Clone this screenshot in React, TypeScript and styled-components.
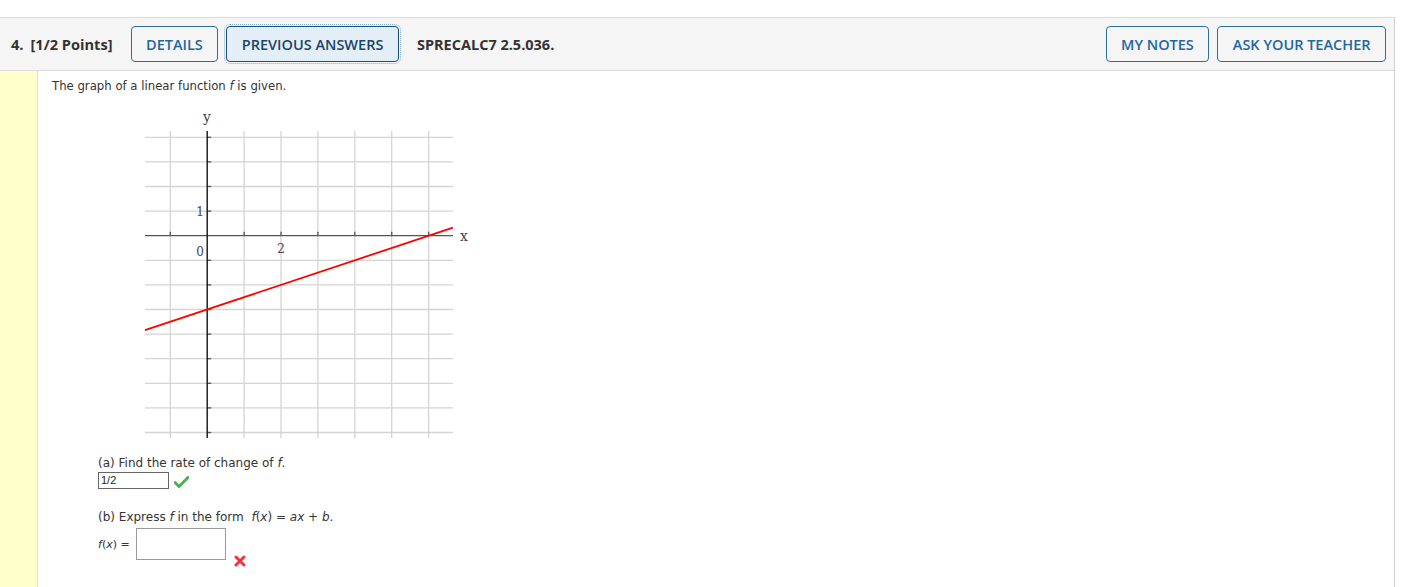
import React from "react";
import styled, { createGlobalStyle } from "styled-components";

const GlobalStyle = createGlobalStyle`
  html, body { margin: 0; padding: 0; background: #ffffff; }
  body { font-family: "DejaVu Sans", Verdana, sans-serif; color: #333333; }
`;

const Page = styled.div`
  padding-top: 17px;
  width: 1395px;
`;

const Question = styled.section`
  border-top: 1px solid #dcdcdc;
  border-right: 1px solid #cfcfcf;
`;

const Header = styled.header`
  display: flex;
  align-items: center;
  gap: 8px;
  height: 52px;
  padding: 0 8px 0 11px;
  background: #f5f5f5;
  border-bottom: 1px solid #dcdcdc;
  font-family: "Open Sans", "Liberation Sans", sans-serif;
`;

const Title = styled.span`
  font-size: 14.6px;
  font-weight: 700;
  color: #333333;
  margin-right: 10px;
  white-space: nowrap;
`;

const Num = styled.span`
  margin-right: 7px;
`;

const Button = styled.button<{ $active?: boolean }>`
  height: 36px;
  padding: 0 14.5px;
  border-radius: 4px;
  border: 1px solid ${(p) => (p.$active ? "#1c4e74" : "#2b6ea0")};
  background: ${(p) => (p.$active ? "#e4eef6" : "transparent")};
  color: ${(p) => (p.$active ? "#1b4566" : "#1e67a0")};
  font-family: "Open Sans", "Liberation Sans", sans-serif;
  font-size: 14.5px;
  font-weight: 600;
  white-space: nowrap;
  outline: ${(p) => (p.$active ? "1px dotted #7aaee0" : "none")};
  outline-offset: 1px;
`;

const Code = styled.span`
  margin-left: 10px;
  font-size: 14.5px;
  font-weight: 700;
  color: #333333;
`;

const Spacer = styled.div`
  flex: 1;
`;

const Body = styled.div`
  display: flex;
  min-height: 520px;
`;

const Marker = styled.div`
  width: 37px;
  flex: none;
  background: #ffffcc;
  border-right: 1px solid #dcdcdc;
`;

const Content = styled.div`
  padding: 7px 0 0 14px;
  font-size: 12px;
`;

const Text = styled.p<{ $size?: number }>`
  margin: 0;
  line-height: 16px;
  font-size: ${(p) => p.$size ?? 12}px;
  color: #333333;
`;

const GraphBox = styled.div`
  margin: 6px 0 0 78px;
  height: 345px;
`;

const Parts = styled.div`
  margin: 10px 0 0 46px;
`;

const AnswerRow = styled.div<{ $top: number }>`
  display: flex;
  align-items: flex-start;
  margin-top: ${(p) => p.$top}px;
`;

const SmallInput = styled.div`
  box-sizing: border-box;
  width: 71px;
  height: 17px;
  border: 1px solid #666666;
  font-family: "Liberation Sans", Arial, sans-serif;
  font-size: 11px;
  line-height: 15px;
  padding-left: 2px;
  color: #222222;
`;

const BigInput = styled.div`
  box-sizing: border-box;
  width: 90px;
  height: 32px;
  border: 1px solid #9a9a9a;
  background: #ffffff;
`;

const FxLabel = styled.span`
  font-size: 11px;
  line-height: 16px;
  margin: 9px 6px 0 0;
  color: #333333;
`;

const Icon = styled.span<{ $left: number; $top: number }>`
  display: inline-flex;
  margin-left: ${(p) => p.$left}px;
  margin-top: ${(p) => p.$top}px;
`;

const I = styled.i`
  font-style: italic;
`;

const Graph: React.FC = () => {
  const vx = Array.from({ length: 8 }, (_, k) => 170.3 + 36.9 * k);
  const hy = Array.from({ length: 13 }, (_, k) => 137.3 + 24.6 * k);
  const y0 = 235.7;
  const x0 = 207.2;
  return (
    <svg width="350" height="345" viewBox="130 100 350 345">
      <g stroke="#d4d4d4" strokeWidth="1.3">
        {vx.map((x, i) =>
          i === 1 ? null : <line key={"v" + i} x1={x} y1={131} x2={x} y2={438} />
        )}
        {hy.map((y, i) =>
          i === 4 ? null : <line key={"h" + i} x1={145} y1={y} x2={453} y2={y} />
        )}
      </g>
      <line x1={145} y1={y0} x2={453} y2={y0} stroke="#555555" strokeWidth="1.3" />
      <g stroke="#555555" strokeWidth="1.3">
        {vx.map((x, i) =>
          i === 1 ? null : <line key={"tx" + i} x1={x} y1={y0 - 4} x2={x} y2={y0} />
        )}
        {hy.map((y, i) =>
          i === 4 ? null : <line key={"ty" + i} x1={x0} y1={y} x2={x0 + 4} y2={y} />
        )}
      </g>
      <line x1={x0} y1={131} x2={x0} y2={438} stroke="#111111" strokeWidth="1.4" />
      <line x1={145} y1={330.2} x2={453} y2={227.6} stroke="#ff0000" strokeWidth="1.8" />
      <g fontFamily='"DejaVu Serif", "Liberation Serif", serif' fill="#444444">
        <text x={207} y={122} fontSize="14" textAnchor="middle">y</text>
        <text x={464} y={241} fontSize="14" textAnchor="middle">x</text>
        <text x={204} y={216} fontSize="12" textAnchor="end">1</text>
        <text x={200} y={256} fontSize="12" textAnchor="middle">0</text>
        <text x={281} y={253} fontSize="12" textAnchor="middle">2</text>
      </g>
    </svg>
  );
};

const Check = () => (
  <svg width="15" height="12" viewBox="0 0 15 12">
    <path d="M1 6.5 L5 10.5 L14 1.5" fill="none" stroke="#4cb050" strokeWidth="3" strokeLinecap="round" strokeLinejoin="round" />
  </svg>
);

const Cross = () => (
  <svg width="12" height="12" viewBox="0 0 12 12">
    <path d="M2 2 L10 10 M10 2 L2 10" fill="none" stroke="#ee3344" strokeWidth="3" strokeLinecap="round" />
  </svg>
);

export default function App() {
  return (
    <>
      <GlobalStyle />
      <Page>
        <Question>
          <Header>
            <Title>
              <Num>4.</Num>[1/2 Points]
            </Title>
            <Button>DETAILS</Button>
            <Button $active>PREVIOUS ANSWERS</Button>
            <Code>SPRECALC7 2.5.036.</Code>
            <Spacer />
            <Button>MY NOTES</Button>
            <Button>ASK YOUR TEACHER</Button>
          </Header>
          <Body>
            <Marker />
            <Content>
              <Text $size={11.7}>
                The graph of a linear function <I>f</I> is given.
              </Text>
              <GraphBox>
                <Graph />
              </GraphBox>
              <Parts>
                <Text>
                  (a) Find the rate of change of <I>f</I>.
                </Text>
                <AnswerRow $top={1}>
                  <SmallInput>1/2</SmallInput>
                  <Icon $left={5} $top={4}>
                    <Check />
                  </Icon>
                </AnswerRow>
                <AnswerRow $top={20}>
                  <Text>
                    (b) Express <I>f</I> in the form&nbsp; <I>f</I>(<I>x</I>) = <I>ax</I> + <I>b</I>.
                  </Text>
                </AnswerRow>
                <AnswerRow $top={3}>
                  <FxLabel>
                    <I>f</I>(<I>x</I>) =
                  </FxLabel>
                  <BigInput />
                  <Icon $left={8} $top={27}>
                    <Cross />
                  </Icon>
                </AnswerRow>
              </Parts>
            </Content>
          </Body>
        </Question>
      </Page>
    </>
  );
}
